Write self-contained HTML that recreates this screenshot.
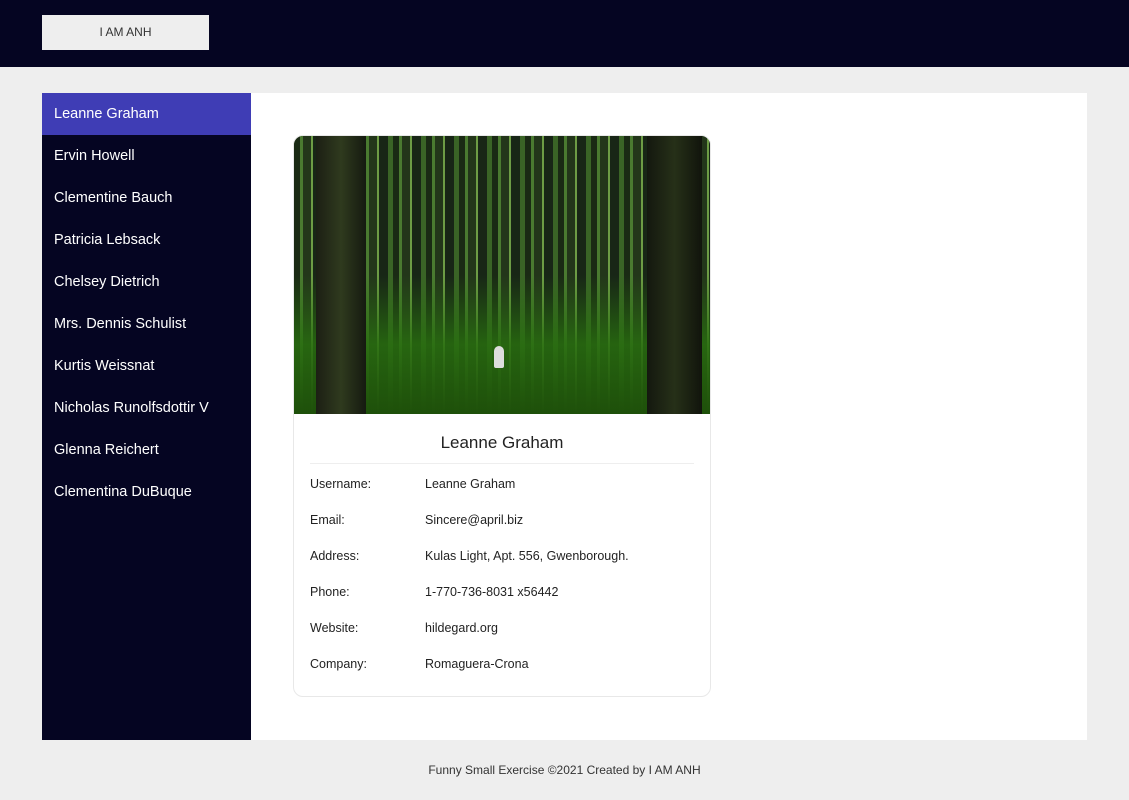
<!DOCTYPE html>
<html><head><meta charset="utf-8"><style>
*{box-sizing:border-box;margin:0;padding:0}
body{width:1129px;height:800px;background:#eeeeee;font-family:"Liberation Sans",sans-serif;position:relative;overflow:hidden}
.hdr{position:absolute;left:0;top:0;width:1129px;height:67px;background:#050522}
.logo{position:absolute;left:42px;top:15px;width:167px;height:35px;background:#eeeeee;color:#333;font-size:12px;text-align:center;line-height:35px}
.side{position:absolute;left:42px;top:93px;width:209px;height:647px;background:#050522}
.side div{height:42px;line-height:43px;padding-left:12px;color:#fff;font-size:14.5px}
.side .act{background:#3f3db5}
.main{position:absolute;left:251px;top:93px;width:836px;height:647px;background:#fff}
.card{position:absolute;left:293px;top:135px;width:418px;height:562px;border:1px solid #e8e8e8;border-radius:10px;overflow:hidden;background:#fff}
.img{height:278px;background:
linear-gradient(to bottom,rgba(0,0,0,0) 50%,rgba(40,110,15,.85) 75%,rgba(30,80,10,1)),
repeating-linear-gradient(90deg,#1a2a14 0 6px,#4a7a30 6px 9px,#23361a 9px 17px,#6d9c45 17px 19px,#182616 19px 28px,#3a6426 28px 33px),
#2a3d1c;position:relative}
.img:before{content:"";position:absolute;left:22px;top:0;width:50px;height:278px;background:linear-gradient(90deg,#1c1f14,#2f3a1e,#151a10)}
.img:after{content:"";position:absolute;right:8px;top:0;width:55px;height:278px;background:linear-gradient(90deg,#14180f,#263018,#11140c)}
.fig{position:absolute;left:200px;top:210px;width:10px;height:22px;background:#ddd;border-radius:5px 5px 2px 2px}
h2{text-align:center;font-weight:normal;font-size:17px;color:#222;margin-top:19px}
hr{border:0;border-top:1px solid #eee;margin:10px 16px 0}
.row{position:relative;height:36px;font-size:12.5px;color:#222}
.row span{position:absolute;top:11px}
.row .l{left:16px}.row .v{left:131px}
.foot{position:absolute;top:763px;width:1129px;text-align:center;font-size:12px;color:#333}
</style></head><body>
<div class="hdr"><div class="logo">I AM ANH</div></div>
<div class="side">
<div class="act">Leanne Graham</div><div>Ervin Howell</div><div>Clementine Bauch</div><div>Patricia Lebsack</div><div>Chelsey Dietrich</div><div>Mrs. Dennis Schulist</div><div>Kurtis Weissnat</div><div>Nicholas Runolfsdottir V</div><div>Glenna Reichert</div><div>Clementina DuBuque</div>
</div>
<div class="main"></div>
<div class="card">
<div class="img"><div class="fig"></div></div>
<h2>Leanne Graham</h2><hr>
<div style="height:2px"></div>
<div class="row"><span class="l">Username:</span><span class="v">Leanne Graham</span></div>
<div class="row"><span class="l">Email:</span><span class="v">Sincere@april.biz</span></div>
<div class="row"><span class="l">Address:</span><span class="v">Kulas Light, Apt. 556, Gwenborough.</span></div>
<div class="row"><span class="l">Phone:</span><span class="v">1-770-736-8031 x56442</span></div>
<div class="row"><span class="l">Website:</span><span class="v">hildegard.org</span></div>
<div class="row"><span class="l">Company:</span><span class="v">Romaguera-Crona</span></div>
</div>
<div class="foot">Funny Small Exercise ©2021 Created by I AM ANH</div>
</body></html>
